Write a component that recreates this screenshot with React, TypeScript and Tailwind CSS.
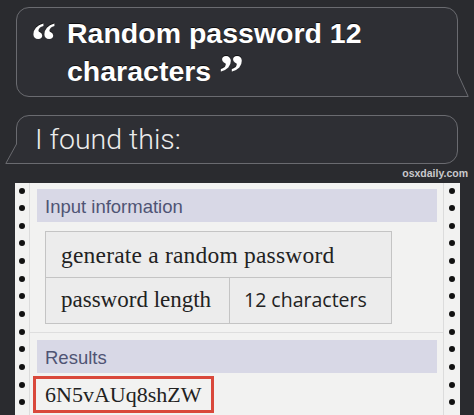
import React from 'react';

const BUBBLE_BG = '#2e2f34';
const BUBBLE_LINE = '#6a6b70';

function Dots({ count }: { count: number }) {
  return (
    <div className="flex flex-col items-center gap-[11.65px] pt-[4.5px]">
      {Array.from({ length: count }).map((_, i) => (
        <span key={i} className="block shrink-0 w-[6px] h-[6px] rounded-full bg-[#111]" />
      ))}
    </div>
  );
}

function SectionBar({ label }: { label: string }) {
  return (
    <div className="ml-[7px] mr-[6px] h-[33px] bg-[#d8d8e6] pl-[8px] pt-[1px] text-[18.5px] leading-[33px] text-[#4f5474] font-['Liberation_Sans',sans-serif]">
      {label}
    </div>
  );
}

export default function App() {
  return (
    <div className="w-[474px] h-[415px] overflow-hidden bg-[#2a2b2f] flex flex-col font-['Liberation_Sans',sans-serif]">
      {/* spoken query */}
      <div className="relative shrink-0 mt-[7px] ml-[16px] w-[442px] h-[90px] rounded-[13px] rounded-br-none border border-[#6a6b70] bg-[#2e2f34] pl-[16px] pt-[6px]">
        <div className="flex text-white font-bold text-[28.5px] leading-[38px] [text-shadow:0_-1px_0_rgba(0,0,0,0.7)]">
          <span className="-ml-[2px] w-[36px] shrink-0 h-[38px] pt-[2.5px] font-['Liberation_Serif',serif] text-[50px] leading-[46px]">&ldquo;</span>
          <span>
            Random password 12 characters&nbsp;
            <span className="inline-block h-[38px] align-top pt-[4.5px] font-['Liberation_Serif',serif] text-[50px] leading-[30px]">&rdquo;</span>
          </span>
        </div>
        <svg className="absolute right-[-12px] bottom-[-1px]" width="13" height="24" viewBox="0 0 13 24">
          <polygon points="0,0 1.5,0 12.5,23.5 0,23.5" fill={BUBBLE_BG} />
          <path d="M1.5 0 L12.2 23.5 L0 23.5" fill="none" stroke={BUBBLE_LINE} strokeWidth="1" />
        </svg>
      </div>

      {/* siri answer */}
      <div className="relative shrink-0 mt-[18px] ml-[16px] w-[442px] h-[49px] rounded-[13px] rounded-bl-none border border-[#6a6b70] bg-[#2e2f34] pl-[18px] pt-[6px]">
        <div className="text-[#ececec] font-['Roboto',sans-serif] font-light text-[28.5px] leading-[36px]">I found this:</div>
        <svg className="absolute left-[-12px] bottom-[-1px]" width="13" height="20" viewBox="0 0 13 20">
          <polygon points="11.5,0 13,0 13,19.5 0.5,19.5" fill={BUBBLE_BG} />
          <path d="M11.5 0 L0.8 19.5 L13 19.5" fill="none" stroke={BUBBLE_LINE} strokeWidth="1" />
        </svg>
      </div>

      <div className="shrink-0 h-[19px] pr-[6px] text-right text-[10.5px] leading-[19px] font-bold text-[#c9c9cc]">osxdaily.com</div>

      {/* result card */}
      <div className="ml-[15px] w-[445px] flex-1 min-h-0 overflow-hidden flex bg-[#f2f2f1]">
        <div className="w-[15px] border-r border-[#dcdcdc] overflow-hidden">
          <Dots count={14} />
        </div>

        <div className="flex-1 flex flex-col pt-[6px]">
          <SectionBar label="Input information" />

          <div className="ml-[15px] mt-[9px] w-[347px] border border-[#c4c4c4] bg-[#ececec] text-[#222] font-['Liberation_Serif',serif]">
            <div className="h-[46px] border-b border-[#c4c4c4] pl-[15px] text-[23.5px] leading-[46px] tracking-[0.2px]">
              generate a random password
            </div>
            <div className="h-[45px] flex">
              <div className="w-[184px] border-r border-[#c4c4c4] pl-[15px] text-[23px] leading-[44px]">password length</div>
              <div className="flex-1 pl-[14px] font-['Open_Sans',sans-serif] text-[19.5px] leading-[44px]">12 characters</div>
            </div>
          </div>

          <div className="mt-[8px] h-px bg-[#dedede]" />

          <div className="mt-[7px]">
            <SectionBar label="Results" />
          </div>

          <div className="ml-[3px] mt-[3px] w-[181px] h-[37px] shrink-0 border-[3px] border-[#d9483b] pl-[9px] text-[22px] leading-[31px] text-[#222] font-['Liberation_Serif',serif]">
            6N5vAUq8shZW
          </div>
        </div>

        <div className="w-[17px] border-l border-[#dcdcdc] overflow-hidden">
          <Dots count={14} />
        </div>
      </div>
    </div>
  );
}
